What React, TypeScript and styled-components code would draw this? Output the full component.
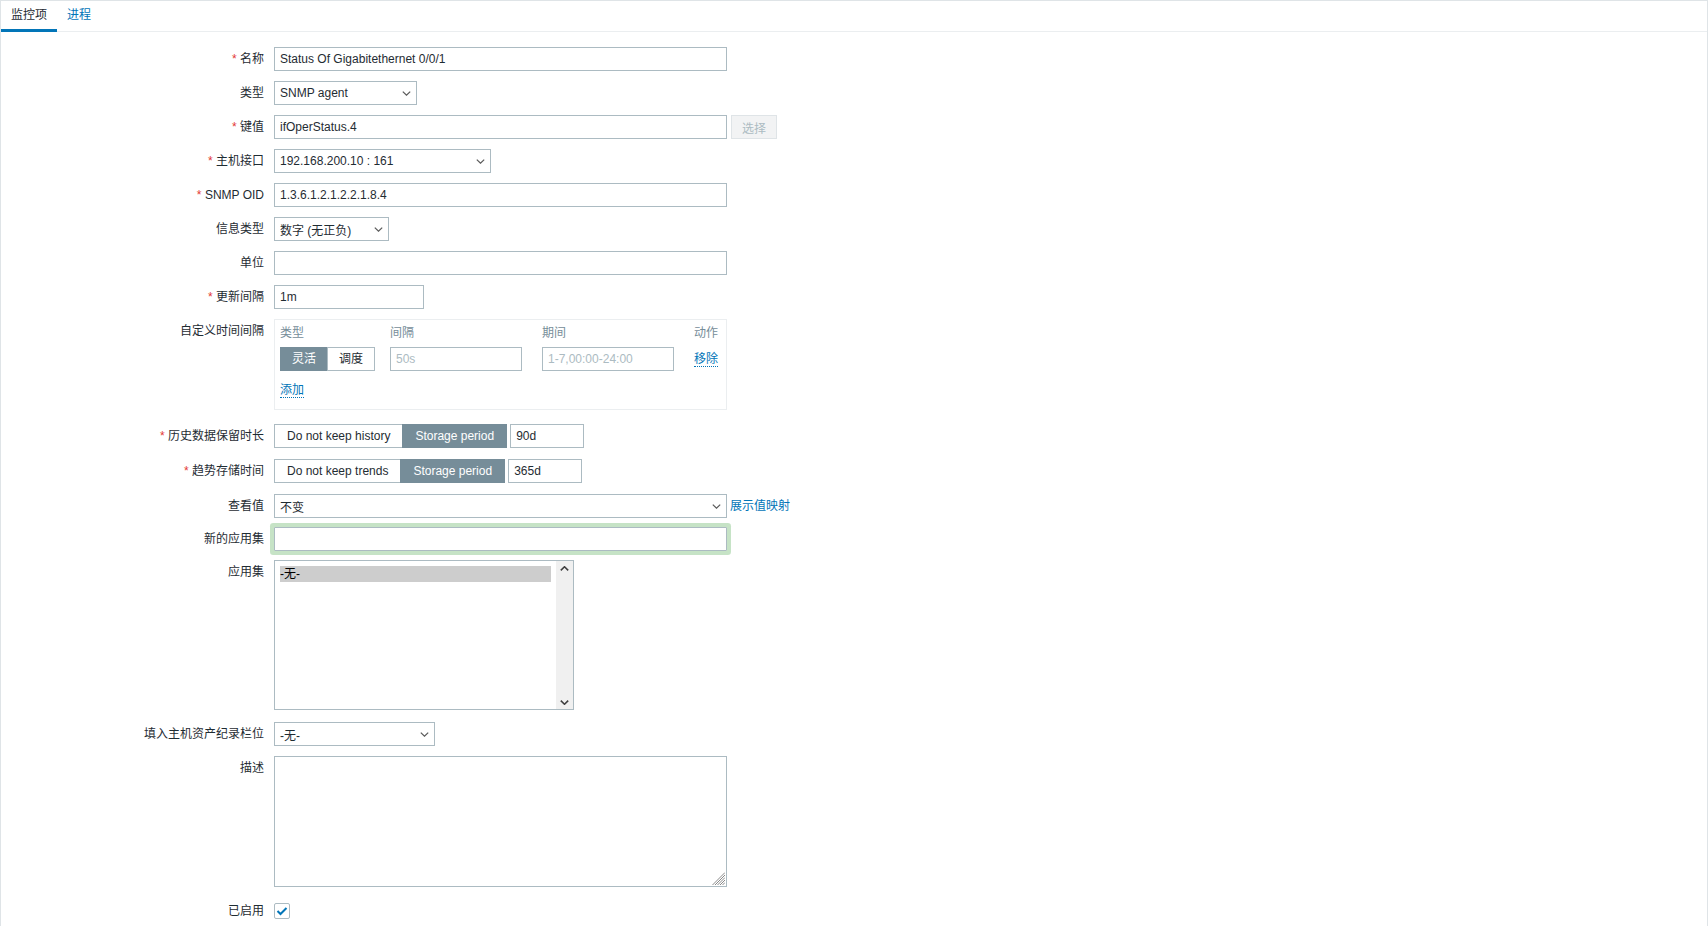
import React from 'react';
import styled, { createGlobalStyle } from 'styled-components';

const GlobalStyle = createGlobalStyle`
  html, body {
    margin: 0;
    padding: 0;
    background: #ffffff;
  }
  body {
    font-family: "Liberation Sans", Arial, "Noto Sans CJK SC", sans-serif;
    font-size: 12px;
    color: #1f2c33;
    overflow: hidden;
  }
  * {
    box-sizing: border-box;
  }
`;

const Panel = styled.div`
  height: 926px;
  border: 1px solid #dfe4e7;
  border-bottom: 0;
  background: #ffffff;
`;

const TabBar = styled.div`
  display: flex;
  height: 31px;
  border-bottom: 1px solid #ebeef0;
`;

const Tab = styled.div<{ $active?: boolean }>`
  height: 31px;
  padding: 0 10px;
  line-height: 28px;
  border-bottom: 3px solid ${(p) => (p.$active ? '#0275b8' : 'transparent')};
  color: ${(p) => (p.$active ? '#1f2c33' : '#0275b8')};
  cursor: pointer;
`;

const Form = styled.div`
  padding-top: 15px;
`;

const Row = styled.div<{ $mb?: number }>`
  display: grid;
  grid-template-columns: 263px 1fr;
  column-gap: 10px;
  margin-bottom: ${(p) => p.$mb ?? 10}px;
`;

const Label = styled.div`
  text-align: right;
  line-height: 24px;
  white-space: nowrap;
`;

const Req = styled.span`
  color: #e33734;
`;

const Control = styled.div`
  display: flex;
  align-items: flex-start;
`;

const TextInput = styled.input<{ $w: number; $glow?: boolean }>`
  width: ${(p) => p.$w}px;
  height: 24px;
  margin: 0;
  padding: 0 5px;
  border: 1px solid #acbbc2;
  border-radius: ${(p) => (p.$glow ? '1px' : '0')};
  background: #ffffff;
  color: #1f2c33;
  font: inherit;
  outline: none;
  box-shadow: ${(p) => (p.$glow ? '0 0 0 4px #c6e3c6' : 'none')};
  &::placeholder {
    color: #acbbc2;
  }
`;

const SelectBox = styled.div<{ $w: number }>`
  width: ${(p) => p.$w}px;
  height: 24px;
  padding: 0 5px;
  border: 1px solid #acbbc2;
  background: #ffffff;
  display: flex;
  align-items: center;
  justify-content: space-between;
  white-space: nowrap;
`;

const GhostButton = styled.button`
  width: 46px;
  height: 24px;
  margin: 0 0 0 4px;
  padding: 0;
  border: 1px solid #dfe4e7;
  background: #f2f3f4;
  color: #acbbc2;
  font: inherit;
`;

const IntervalBox = styled.div`
  width: 453px;
  border: 1px solid #ebeef0;
  padding: 5px 5px 7px;
`;

const IntervalGrid = styled.div`
  display: grid;
  grid-template-columns: 110px 152px 152px 1fr;
  row-gap: 6px;
  align-items: center;
`;

const ColHead = styled.div`
  color: #768d99;
  line-height: 16px;
`;

const Segmented = styled.div`
  display: flex;
`;

const Segment = styled.div<{ $active?: boolean }>`
  height: 24px;
  padding: 0 12px;
  line-height: 22px;
  white-space: nowrap;
  border: 1px solid ${(p) => (p.$active ? '#768d99' : '#acbbc2')};
  background: ${(p) => (p.$active ? '#768d99' : '#ffffff')};
  color: ${(p) => (p.$active ? '#ffffff' : '#1f2c33')};
  & + & {
    margin-left: -1px;
  }
`;

const SmallSegment = styled(Segment)`
  padding: 0 11px;
`;

const DottedLink = styled.span`
  display: inline-block;
  line-height: 14px;
  color: #0275b8;
  border-bottom: 1px dotted #0275b8;
  cursor: pointer;
`;

const PlainLink = styled.span`
  color: #0275b8;
  line-height: 24px;
  margin-left: 3px;
  white-space: nowrap;
  cursor: pointer;
`;

const AddLine = styled.div`
  margin-top: 7px;
  height: 24px;
  padding-top: 5px;
`;

const PeriodInput = styled(TextInput)`
  margin-left: 3px;
`;

const ListBox = styled.div`
  width: 300px;
  height: 150px;
  border: 1px solid #acbbc2;
  display: flex;
`;

const ListItems = styled.div`
  flex: 1;
  padding: 5px;
`;

const ListOption = styled.div<{ $selected?: boolean }>`
  height: 16px;
  line-height: 16px;
  background: ${(p) => (p.$selected ? '#cdcdcd' : 'transparent')};
  color: #000000;
`;

const ScrollTrack = styled.div`
  width: 17px;
  background: #f0f0f0;
  display: flex;
  flex-direction: column;
  justify-content: space-between;
  align-items: center;
  padding: 5px 0 4px;
`;

const AreaWrap = styled.div`
  position: relative;
  width: 453px;
  height: 131px;
`;

const TextArea = styled.textarea`
  display: block;
  width: 100%;
  height: 100%;
  margin: 0;
  padding: 4px 5px;
  border: 1px solid #acbbc2;
  font: inherit;
  color: #1f2c33;
  resize: none;
  outline: none;
`;

const Grip = styled.svg`
  position: absolute;
  right: 2px;
  bottom: 2px;
`;

const CheckBox = styled.div`
  width: 16px;
  height: 16px;
  margin-top: 4px;
  border: 1px solid #acbbc2;
  border-radius: 2px;
  background: #ffffff;
  display: flex;
  align-items: center;
  justify-content: center;
`;

const Chevron: React.FC<{ up?: boolean; color?: string; width?: number }> = ({ up, color = '#5a5a5a', width = 1.2 }) => (
  <svg width="9" height="5" viewBox="0 0 9 5">
    <polyline
      points={up ? '0.8,4.4 4.5,0.8 8.2,4.4' : '0.8,0.6 4.5,4.2 8.2,0.6'}
      fill="none"
      stroke={color}
      strokeWidth={width}
    />
  </svg>
);

const Select: React.FC<{ w: number; value: string }> = ({ w, value }) => (
  <SelectBox $w={w}>
    <span>{value}</span>
    <Chevron />
  </SelectBox>
);

const FieldLabel: React.FC<{ required?: boolean; children: React.ReactNode }> = ({ required, children }) => (
  <Label>
    {required && <Req>* </Req>}
    {children}
  </Label>
);

const App: React.FC = () => {
  return (
    <>
      <GlobalStyle />
      <Panel>
        <TabBar>
          <Tab $active>监控项</Tab>
          <Tab>进程</Tab>
        </TabBar>
        <Form>
          <Row>
            <FieldLabel required>名称</FieldLabel>
            <Control>
              <TextInput $w={453} defaultValue="Status Of Gigabitethernet 0/0/1" />
            </Control>
          </Row>
          <Row>
            <FieldLabel>类型</FieldLabel>
            <Control>
              <Select w={143} value="SNMP agent" />
            </Control>
          </Row>
          <Row>
            <FieldLabel required>键值</FieldLabel>
            <Control>
              <TextInput $w={453} defaultValue="ifOperStatus.4" />
              <GhostButton disabled>选择</GhostButton>
            </Control>
          </Row>
          <Row>
            <FieldLabel required>主机接口</FieldLabel>
            <Control>
              <Select w={217} value="192.168.200.10 : 161" />
            </Control>
          </Row>
          <Row>
            <FieldLabel required>SNMP OID</FieldLabel>
            <Control>
              <TextInput $w={453} defaultValue="1.3.6.1.2.1.2.2.1.8.4" />
            </Control>
          </Row>
          <Row>
            <FieldLabel>信息类型</FieldLabel>
            <Control>
              <Select w={115} value="数字 (无正负)" />
            </Control>
          </Row>
          <Row>
            <FieldLabel>单位</FieldLabel>
            <Control>
              <TextInput $w={453} defaultValue="" />
            </Control>
          </Row>
          <Row>
            <FieldLabel required>更新间隔</FieldLabel>
            <Control>
              <TextInput $w={150} defaultValue="1m" />
            </Control>
          </Row>
          <Row $mb={14}>
            <FieldLabel>自定义时间间隔</FieldLabel>
            <Control>
              <IntervalBox>
                <IntervalGrid>
                  <ColHead>类型</ColHead>
                  <ColHead>间隔</ColHead>
                  <ColHead>期间</ColHead>
                  <ColHead>动作</ColHead>
                  <Segmented>
                    <SmallSegment $active>灵活</SmallSegment>
                    <SmallSegment>调度</SmallSegment>
                  </Segmented>
                  <TextInput $w={132} placeholder="50s" />
                  <TextInput $w={132} placeholder="1-7,00:00-24:00" />
                  <div>
                    <DottedLink>移除</DottedLink>
                  </div>
                </IntervalGrid>
                <AddLine>
                  <DottedLink>添加</DottedLink>
                </AddLine>
              </IntervalBox>
            </Control>
          </Row>
          <Row $mb={11}>
            <FieldLabel required>历史数据保留时长</FieldLabel>
            <Control>
              <Segmented>
                <Segment>Do not keep history</Segment>
                <Segment $active>Storage period</Segment>
              </Segmented>
              <PeriodInput $w={74} defaultValue="90d" />
            </Control>
          </Row>
          <Row $mb={11}>
            <FieldLabel required>趋势存储时间</FieldLabel>
            <Control>
              <Segmented>
                <Segment>Do not keep trends</Segment>
                <Segment $active>Storage period</Segment>
              </Segmented>
              <PeriodInput $w={74} defaultValue="365d" />
            </Control>
          </Row>
          <Row $mb={9}>
            <FieldLabel>查看值</FieldLabel>
            <Control>
              <Select w={453} value="不变" />
              <PlainLink>展示值映射</PlainLink>
            </Control>
          </Row>
          <Row $mb={9}>
            <FieldLabel>新的应用集</FieldLabel>
            <Control>
              <TextInput $w={453} $glow defaultValue="" />
            </Control>
          </Row>
          <Row $mb={12}>
            <FieldLabel>应用集</FieldLabel>
            <Control>
              <ListBox>
                <ListItems>
                  <ListOption $selected>-无-</ListOption>
                </ListItems>
                <ScrollTrack>
                  <Chevron up color="#404040" width={1.6} />
                  <Chevron color="#404040" width={1.6} />
                </ScrollTrack>
              </ListBox>
            </Control>
          </Row>
          <Row>
            <FieldLabel>填入主机资产纪录栏位</FieldLabel>
            <Control>
              <Select w={161} value="-无-" />
            </Control>
          </Row>
          <Row $mb={12}>
            <FieldLabel>描述</FieldLabel>
            <Control>
              <AreaWrap>
                <TextArea defaultValue="" />
                <Grip width="13" height="13" viewBox="0 0 13 13">
                  {[2.5, 5, 7.5, 10, 12.5].map((k) => (
                    <line key={k} x1={13 - k} y1="13" x2="13" y2={13 - k} stroke="#8a8a8a" strokeWidth="1" />
                  ))}
                </Grip>
              </AreaWrap>
            </Control>
          </Row>
          <Row>
            <FieldLabel>已启用</FieldLabel>
            <Control>
              <CheckBox>
                <svg width="12" height="10" viewBox="0 0 12 10">
                  <polyline points="1.5,5 4.5,8 10.5,2" fill="none" stroke="#0275b8" strokeWidth="2" />
                </svg>
              </CheckBox>
            </Control>
          </Row>
        </Form>
      </Panel>
    </>
  );
};

export default App;
